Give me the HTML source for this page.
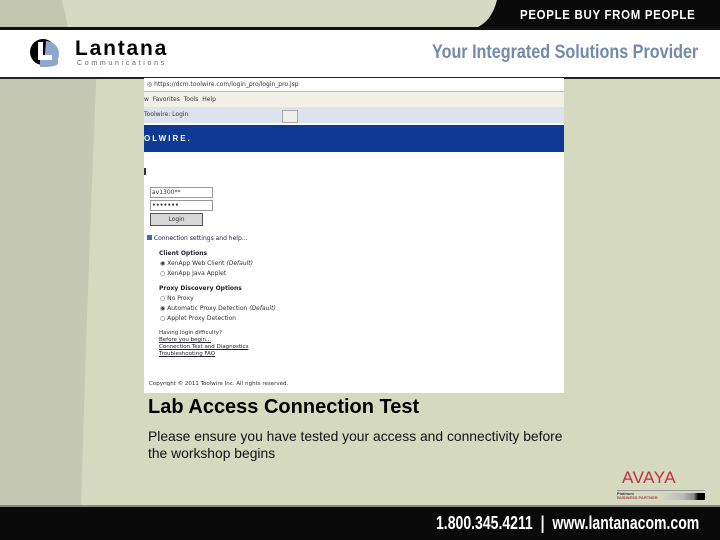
<!DOCTYPE html><html><head><style>
*{margin:0;padding:0}
body{width:720px;height:540px;position:relative;overflow:hidden;background:#d5d9c0;font-family:"Liberation Sans",sans-serif}
.a{position:absolute;white-space:nowrap}
.s{font-family:"DejaVu Sans","Liberation Sans",sans-serif;font-size:6px;color:#333}
</style></head><body>
<svg class="a" style="left:0;top:0" width="720" height="540">
<path d="M0 0H100Q90 200 80 540H0Z" fill="#c5c9b3"/>
<path d="M0 0H720V27H0Z" fill="#d6dac3"/>
<path d="M0 0H62L68 27H0Z" fill="#c3c7b0"/>
<path d="M497 0H720V27H478Q492 20 497 0Z" fill="#0a0a0a"/>
<rect x="0" y="27" width="720" height="3" fill="#111"/>
<rect x="0" y="30" width="720" height="47" fill="#fff"/>
<rect x="0" y="77" width="720" height="2" fill="#222"/>
<rect x="0" y="507" width="720" height="33" fill="#0a0a0a"/>
<rect x="0" y="505" width="720" height="2" fill="#888"/>
<circle cx="43" cy="52" r="13" fill="#000"/>
<path d="M46 41A13 13 0 0 1 46 67H40V57H58V64A13 13 0 0 1 44 65Z" fill="#8fa6cf"/>
<rect x="38" y="42" width="5" height="18" fill="#fff"/><rect x="38" y="55" width="14" height="5" fill="#fff"/>
</svg>
<div class="a" style="left:75px;top:37px;font-weight:bold;font-size:21px;letter-spacing:1.8px">Lantana</div>
<div class="a" style="left:77px;top:60px;font-size:7px;letter-spacing:2.7px;color:#666">Communications</div>
<div class="a" style="left:520px;top:7px;color:#fff;font-weight:bold;font-size:13px;transform:scaleX(.88);transform-origin:0 0;letter-spacing:.8px">PEOPLE BUY FROM PEOPLE</div>
<div class="a" style="left:432px;top:42px;color:#7389ad;font-weight:bold;font-size:19px;transform:scaleX(.85);transform-origin:0 0">Your Integrated Solutions Provider</div>
<div class="a" style="left:144px;top:78px;width:420px;height:315px;background:#fff;overflow:hidden">
 <div class="a s" style="left:0;top:0;width:420px;height:13px;border-bottom:1px solid #bbb;line-height:13px;padding-left:3px;background:#fff">◎ https://dcm.toolwire.com/login_pro/login_pro.jsp</div>
 <div class="a s" style="left:0;top:14px;width:420px;height:15px;line-height:15px;background:#f1efe6">w &nbsp;Favorites &nbsp;Tools &nbsp;Help</div>
 <div class="a s" style="left:0;top:29px;width:420px;height:16px;line-height:16px;background:#dde3ec">Toolwire: Login</div>
 <div class="a" style="left:138px;top:32px;width:14px;height:11px;background:#eee;border:1px solid #aaa"></div>
 <div class="a" style="left:0;top:47px;width:420px;height:27px;background:#0e3a94;color:#fff;font-weight:bold;font-size:8px;letter-spacing:2px;line-height:27px">OLWIRE.</div>
 <div class="a" style="left:0;top:90px;width:2px;height:7px;background:#333"></div>
 <div class="a s" style="left:6px;top:109px;width:60px;height:9px;border:1px solid #999;line-height:9px;padding-left:1px">av1300**</div>
 <div class="a s" style="left:6px;top:122px;width:60px;height:9px;border:1px solid #999;line-height:9px;padding-left:1px;font-weight:bold">•••••••</div>
 <div class="a s" style="left:6px;top:135px;width:51px;height:11px;border:1px solid #555;background:#d8d8d8;text-align:center;line-height:11px">Login</div>
 <div class="a s" style="left:3px;top:157px;color:#224"><span style="display:inline-block;width:5px;height:5px;background:#3a6fb0"></span> Connection settings and help...</div>
 <div class="a s" style="left:15px;top:172px;font-weight:bold;color:#223">Client Options</div>
 <div class="a s" style="left:16px;top:182px">◉ XenApp Web Client <i>(Default)</i></div>
 <div class="a s" style="left:16px;top:192px">○ XenApp Java Applet</div>
 <div class="a s" style="left:15px;top:207px;font-weight:bold;color:#223">Proxy Discovery Options</div>
 <div class="a s" style="left:16px;top:217px">○ No Proxy</div>
 <div class="a s" style="left:16px;top:227px">◉ Automatic Proxy Detection <i>(Default)</i></div>
 <div class="a s" style="left:16px;top:237px">○ Applet Proxy Detection</div>
 <div class="a s" style="left:15px;top:252px;font-size:5.5px">Having login difficulty?</div>
 <div class="a s" style="left:15px;top:259px;font-size:5.5px;color:#223;text-decoration:underline;line-height:7px">Before you begin...<br>Connection Test and Diagnostics<br>Troubleshooting FAQ</div>
 <div class="a s" style="left:5px;top:303px;font-size:5.5px">Copyright © 2011 Toolwire Inc. All rights reserved.</div>
</div>
<div class="a" style="left:148px;top:396px;font-weight:bold;font-size:20px;color:#000">Lab Access Connection Test</div>
<div class="a" style="left:148px;top:428px;font-size:14px;line-height:17px;color:#111;transform:scaleX(.99);transform-origin:0 0">Please ensure you have tested your access and connectivity before<br>the workshop begins</div>
<div class="a" style="left:622px;top:468px;color:#c0303a;font-size:17px;letter-spacing:.5px">AVAYA</div>
<div class="a" style="left:617px;top:490px;width:88px;height:1px;background:#999"></div>
<div class="a" style="left:617px;top:492px;font-size:4px;font-weight:bold;color:#333;line-height:4px">Platinum<br><span style="color:#a44">BUSINESS PARTNER</span></div>
<div class="a" style="left:660px;top:493px;width:45px;height:7px;background:linear-gradient(90deg,#d5d9c0,#bbb 50%,#888 75%,#000 85%)"></div>
<div class="a" style="left:436px;top:513px;color:#fff;font-weight:bold;font-size:18px;transform:scaleX(.78);transform-origin:0 0">1.800.345.4211 &nbsp;|&nbsp; www.lantanacom.com</div>
</body></html>
